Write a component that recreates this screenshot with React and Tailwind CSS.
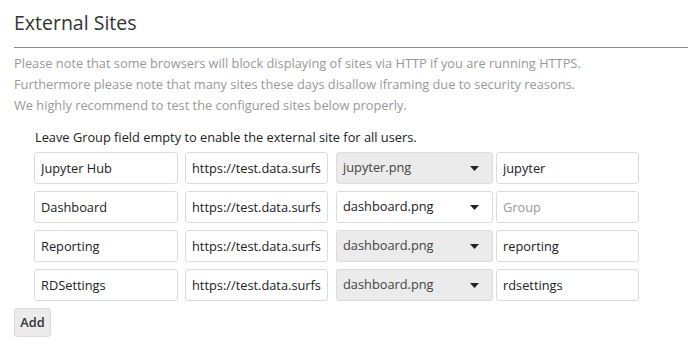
import React from "react";

const rows = [
  { name: "Jupyter Hub", url: "https://test.data.surfsara.nl/jupyter", icon: "jupyter.png", group: "jupyter", active: false },
  { name: "Dashboard", url: "https://test.data.surfsara.nl/dashboard", icon: "dashboard.png", group: "", active: true },
  { name: "Reporting", url: "https://test.data.surfsara.nl/reporting", icon: "dashboard.png", group: "reporting", active: false },
  { name: "RDSettings", url: "https://test.data.surfsara.nl/rdsettings", icon: "dashboard.png", group: "rdsettings", active: false },
];

function Field({ value, placeholder, w }) {
  return (
    <input
      readOnly
      defaultValue={value}
      placeholder={placeholder}
      className={`${w} h-[32px] shrink-0 rounded-[3px] border border-[#dbdbdb] bg-white px-[6px] text-[12.8px] text-[#222] placeholder:text-[#999] outline-none`}
      style={{ fontFamily: "'Open Sans', sans-serif" }}
    />
  );
}

export default function App() {
  return (
    <div className="min-h-[354px] bg-white pl-[14px] pr-[2px] font-['Open_Sans',sans-serif] text-[12.8px] text-[#222]">
      <h2 className="pt-[9px] text-[19.5px] leading-[28px] font-normal text-[#333]">External Sites</h2>
      <div className="mt-[10px] h-px bg-[#8c8c8c]" />
      <div className="mt-[5px] leading-[21px] text-[#999]">
        <p>Please note that some browsers will block displaying of sites via HTTP if you are running HTTPS.</p>
        <p>Furthermore please note that many sites these days disallow iframing due to security reasons.</p>
        <p>We highly recommend to test the configured sites below properly.</p>
      </div>
      <p className="mt-[11px] pl-[21px] leading-[20px] text-[#222]">Leave Group field empty to enable the external site for all users.</p>
      <div className="mt-[5px] flex flex-col gap-[7px] pl-[20px]">
        {rows.map((r) => (
          <div key={r.name} className="flex items-center">
            <Field value={r.name} w="w-[144px]" />
            <div className="w-[7px] shrink-0" />
            <Field value={r.url} w="w-[143px]" />
            <div className="w-[8px] shrink-0" />
            <div
              className={`flex h-[32px] w-[157px] shrink-0 items-center justify-between rounded-[3px] border border-[#dbdbdb] pl-[6px] pr-[13px] ${
                r.active ? "bg-white text-[#222]" : "bg-[#ebebeb] text-[#444]"
              }`}
            >
              <span>{r.icon}</span>
              <svg width="9" height="5" viewBox="0 0 9 5">
                <path d="M0 0 L9 0 L4.5 5 Z" fill="#222" />
              </svg>
            </div>
            <div className="w-[3px] shrink-0" />
            <Field value={r.group} placeholder="Group" w="w-[143px]" />
          </div>
        ))}
      </div>
      <button className="mt-[7px] h-[29px] w-[37px] rounded-[3px] border border-[#dbdbdb] bg-[#ebebeb] text-[12.8px] font-semibold text-[#333]">
        Add
      </button>
    </div>
  );
}
